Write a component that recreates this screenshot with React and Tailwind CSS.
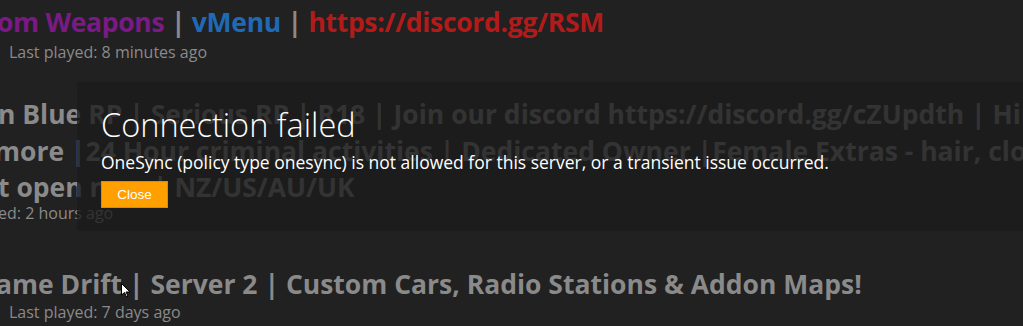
import React from "react";

const titleFont = { fontFamily: '"Open Sans", "Noto Sans", sans-serif' };

export default function App() {
  return (
    <div
      className="relative w-[1023px] h-[326px] overflow-hidden bg-[#212121]"
      style={titleFont}
    >
      <div className="flex flex-col">
        {/* Row 1 */}
        <div className="pt-[4px]">
          <div className="ml-[-3px] whitespace-nowrap text-[26.5px] font-bold leading-[36px] tracking-[-0.3px] text-[#8a8a8a]">
            <span className="text-[#7b1a86]">om Weapons</span>
            <span> | </span>
            <span className="text-[#1f6ab8]">vMenu</span>
            <span> | </span>
            <span className="text-[#b31b1b]">https://discord.gg/RSM</span>
          </div>
          <div className="ml-[9px] mt-[2px] text-[16px] leading-[20px] text-[#8a8a8a]">
            Last played: 8 minutes ago
          </div>
        </div>

        {/* Row 2 */}
        <div className="mt-[34px]">
          <div className="whitespace-nowrap text-[26.5px] font-bold leading-[36.5px] text-[#8a8a8a]">
            <div className="ml-[-2px]">n Blue RP | Serious RP | R18 | Join our discord https://discord.gg/cZUpdth | Hiring</div>
            <div className="ml-[-6px]">more |24 Hour criminal activities | Dedicated Owner |Female Extras - hair, clothes</div>
            <div className="ml-[-2px]">t open now | NZ/US/AU/UK</div>
          </div>
          <div className="ml-[-2px] mt-[-3px] text-[16px] leading-[20px] text-[#8a8a8a]">
            ed: 2 hours ago
          </div>
        </div>

        {/* Row 3 */}
        <div className="mt-[43px]">
          <div className="ml-[-4px] whitespace-nowrap text-[26.5px] font-bold leading-[36px] text-[#8a8a8a]">
            ame Drift | Server 2 | Custom Cars, Radio Stations &amp; Addon Maps!
          </div>
          <div className="ml-[9px] text-[16px] leading-[20px] text-[#8a8a8a]">
            Last played: 7 days ago
          </div>
        </div>
      </div>

      {/* Modal overlay */}
      <div className="absolute left-[77px] top-[82px] w-[946px] h-[149px] bg-[rgba(27,27,27,0.78)] pl-[24px] pt-[23px]">
        <div className="text-[32.5px] font-light leading-[40px] text-white">
          Connection failed
        </div>
        <div className="mt-[5px] text-[17.5px] leading-[24px] text-white">
          OneSync (policy type onesync) is not allowed for this server, or a transient issue occurred.
        </div>
        <button
          className="mt-[7px] flex w-[67px] h-[27px] items-center justify-center bg-[#ffa000] border border-[#e08800] text-white text-[13.5px] leading-none"
          style={{ fontFamily: '"Liberation Sans", Arial, sans-serif' }}
        >
          Close
        </button>
      </div>

      {/* Mouse cursor */}
      <svg
        className="absolute left-[121px] top-[283px]"
        width="10"
        height="16"
        viewBox="0 0 10 16"
      >
        <path d="M0.5 0.5 L0.5 12 L3.5 9.5 L5.5 14 L7 13.3 L5 9 L9 9 Z" fill="white" stroke="black" strokeWidth="1" />
      </svg>
    </div>
  );
}
